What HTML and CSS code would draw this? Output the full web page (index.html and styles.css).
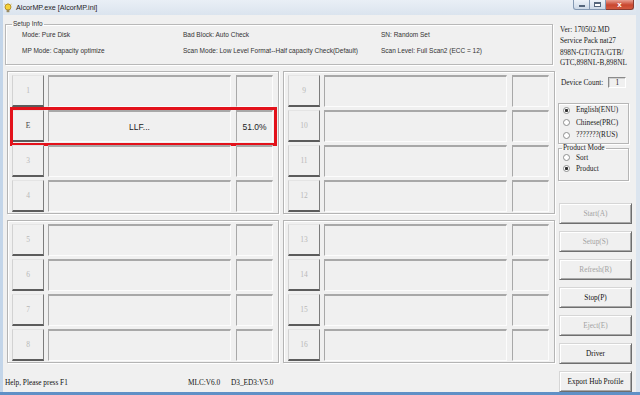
FILE: index.html
```html
<!DOCTYPE html>
<html lang="en">
<head>
  <meta charset="UTF-8">
  <title>AlcorMP.exe [AlcorMP.ini]</title>
  <link rel="stylesheet" href="styles.css">
</head>
<body>
  <div class="window">
    <div class="titlebar">
      <svg class="app-icon" width="8" height="10" viewBox="0 0 8 10">
        <circle cx="4" cy="4" r="3" fill="#f5d23a" stroke="#a9831a" stroke-width="0.8"/>
        <rect x="2.6" y="6.8" width="2.8" height="2.4" fill="#9a8a60"/>
        <path d="M0.3 1 L1.3 1.8 M7.7 1 L6.7 1.8 M4 0 L4 0.8" stroke="#d6a520" stroke-width="0.6"/>
      </svg>
      <span class="title">AlcorMP.exe [AlcorMP.ini]</span>
      <div class="controls">
        <span class="ctl ctl-min"><i></i></span>
        <span class="ctl ctl-max"><i></i></span>
        <span class="ctl ctl-close">x</span>
      </div>
    </div>

    <div class="client">
      <div class="main">
        <fieldset class="setup">
          <legend>Setup Info</legend>
          <div class="info-grid">
            <span>Mode: Pure Disk</span>
            <span>Bad Block: Auto Check</span>
            <span>SN: Random Set</span>
            <span>MP Mode: Capacity optimize</span>
            <span>Scan Mode: Low Level Format--Half capacity Check(Default)</span>
            <span>Scan Level: Full Scan2 (ECC = 12)</span>
          </div>
        </fieldset>

        <div class="slots">
          <div class="group">
            <div class="row"><div class="slot-btn">1</div><div class="field"></div><div class="field"></div></div>
            <div class="row">
              <div class="slot-btn active">E</div>
              <div class="field busy">LLF...</div>
              <div class="field busy">51.0%</div>
              <div class="highlight"></div>
            </div>
            <div class="row"><div class="slot-btn">3</div><div class="field"></div><div class="field"></div></div>
            <div class="row"><div class="slot-btn">4</div><div class="field"></div><div class="field"></div></div>
          </div>
          <div class="group">
            <div class="row"><div class="slot-btn">9</div><div class="field"></div><div class="field"></div></div>
            <div class="row"><div class="slot-btn">10</div><div class="field"></div><div class="field"></div></div>
            <div class="row"><div class="slot-btn">11</div><div class="field"></div><div class="field"></div></div>
            <div class="row"><div class="slot-btn">12</div><div class="field"></div><div class="field"></div></div>
          </div>
          <div class="group">
            <div class="row"><div class="slot-btn">5</div><div class="field"></div><div class="field"></div></div>
            <div class="row"><div class="slot-btn">6</div><div class="field"></div><div class="field"></div></div>
            <div class="row"><div class="slot-btn">7</div><div class="field"></div><div class="field"></div></div>
            <div class="row"><div class="slot-btn">8</div><div class="field"></div><div class="field"></div></div>
          </div>
          <div class="group">
            <div class="row"><div class="slot-btn">13</div><div class="field"></div><div class="field"></div></div>
            <div class="row"><div class="slot-btn">14</div><div class="field"></div><div class="field"></div></div>
            <div class="row"><div class="slot-btn">15</div><div class="field"></div><div class="field"></div></div>
            <div class="row"><div class="slot-btn">16</div><div class="field"></div><div class="field"></div></div>
          </div>
        </div>

        <div class="statusbar">
          <span>Help, Please press F1</span>
          <span>MLC:V6.0</span>
          <span>D3_ED3:V5.0</span>
        </div>
      </div>

      <div class="side">
        <div class="ver">
          <div>Ver: 170502.MD</div>
          <div>Service Pack nat27</div>
        </div>
        <div class="chips">
          <div>898N-GT/GTA/GTB/</div>
          <div>GTC,898NL-B,898NL</div>
        </div>
        <div class="device-count">
          <span>Device Count:</span>
          <span class="count-box">1</span>
        </div>
        <div class="lang">
          <div class="radio"><span class="dot on"></span>English(ENU)</div>
          <div class="radio"><span class="dot"></span>Chinese(PRC)</div>
          <div class="radio"><span class="dot"></span>???????(RUS)</div>
        </div>
        <fieldset class="mode">
          <legend>Product Mode</legend>
          <div class="radio"><span class="dot"></span>Sort</div>
          <div class="radio"><span class="dot on"></span>Product</div>
        </fieldset>
        <div class="buttons">
          <button class="btn" disabled>Start(A)</button>
          <button class="btn" disabled>Setup(S)</button>
          <button class="btn" disabled>Refresh(R)</button>
          <button class="btn">Stop(P)</button>
          <button class="btn" disabled>Eject(E)</button>
          <button class="btn">Driver</button>
          <button class="btn">Export Hub Profile</button>
        </div>
      </div>
    </div>
  </div>
</body>
</html>
```

FILE: styles.css
```css
* {
  box-sizing: border-box;
}
body {
  margin: 0;
  width: 640px;
  height: 395px;
  overflow: hidden;
  background: linear-gradient(#8db4dc, #5f90c6);
  font-family: "Liberation Serif", "Times New Roman", serif;
}
.window {
  height: 392px;
  background: #dfe7f0;
  border-left: 3px solid #c3d5e9;
  border-right: 4px solid #dce5ef;
  display: flex;
  flex-direction: column;
}

/* title bar */
.titlebar {
  height: 15px;
  display: flex;
  align-items: center;
  background: linear-gradient(#e9eff6, #dbe4ee);
}
.app-icon {
  margin-left: 1px;
}
.title {
  margin-left: 4px;
  font: 7.2px "Liberation Sans", Arial, sans-serif;
  color: #1e1e1e;
}
.controls {
  margin-left: auto;
  margin-right: 2px;
  align-self: flex-start;
  display: flex;
}
.ctl {
  height: 10px;
  border: 1px solid #8499b3;
  border-top: none;
  background: linear-gradient(#eef3f9, #cdd9e7);
  display: flex;
  align-items: center;
  justify-content: center;
}
.ctl-min {
  width: 17px;
  border-radius: 0 0 0 3px;
}
.ctl-min i {
  width: 6px;
  height: 2px;
  margin-top: 3px;
  background: #fff;
  border: 1px solid #55667c;
}
.ctl-max {
  width: 16px;
  border-left: none;
}
.ctl-max i {
  width: 7px;
  height: 5px;
  border: 1px solid #55667c;
  border-top-width: 2px;
  background: #fff;
}
.ctl-close {
  width: 28px;
  border-left: none;
  border-color: #8b3b30;
  border-radius: 0 0 3px 0;
  background: linear-gradient(#e8a093, #c9462f 55%, #d2593f);
  color: #fff;
  font: bold 8px/1 "Liberation Sans", Arial, sans-serif;
}

/* client area */
.client {
  flex: 1;
  display: flex;
  background: #f0f0f0;
}
.main {
  width: 552px;
}

.setup {
  margin: 5px 0 0 2px;
  width: 548px;
  height: 45px;
  padding: 0;
  border: 1px solid #b8b8b8;
  box-shadow: inset 1px 1px #fff, 1px 1px #fff;
  font: 6.5px "Liberation Sans", Arial, sans-serif;
  color: #333;
}
.setup legend {
  margin-left: 6px;
  padding: 0 1px;
  line-height: 8px;
}
.info-grid {
  display: grid;
  grid-template-columns: 161px 198px 1fr;
  row-gap: 2px;
  padding-left: 16px;
  line-height: 14px;
}

.slots {
  margin: 6px 0 0 4px;
  display: grid;
  grid-template-columns: 272px 272px;
  grid-auto-rows: 143px;
  gap: 6px 4px;
}
.group {
  border: 1px solid #b4b4b4;
  box-shadow: inset 1px 1px #fff, 1px 1px #fff;
  padding: 3px 5px 0 4px;
  display: grid;
  grid-template-rows: repeat(4, 32px);
  row-gap: 3px;
}
.row {
  position: relative;
  display: grid;
  grid-template-columns: 32px 1fr 38px;
  column-gap: 4px;
}
.slot-btn {
  border: 1px solid;
  border-color: #e4e4e4 #7c7c7c #5c5c5c #d2d2d2;
  border-bottom-width: 2px;
  background: #f0f0f0;
  display: flex;
  align-items: center;
  justify-content: center;
  font-size: 7.5px;
  color: #b8b8b8;
}
.slot-btn.active {
  color: #444;
}
.field {
  border: 1px solid;
  border-color: #a8a8a8 #fcfcfc #fcfcfc #a8a8a8;
  border-top-width: 2px;
  background: #f0f0f0;
  display: flex;
  align-items: center;
  justify-content: center;
  font: 8.5px "Liberation Sans", Arial, sans-serif;
  color: #222;
}
.row .field + .field {
  margin-left: 1px;
}
.highlight {
  position: absolute;
  left: -2px;
  top: -3px;
  right: -4px;
  bottom: -4px;
  border: 3px solid #e3121b;
}

.statusbar {
  margin-top: 13px;
  padding-left: 2px;
  height: 14px;
  display: grid;
  grid-template-columns: 183px 43px auto;
  line-height: 14px;
  font-size: 7.3px;
  color: #111;
}

/* right column */
.side {
  flex: 1;
  padding-top: 9px;
  font-size: 7.3px;
  color: #222;
}
.ver {
  margin-left: 5px;
  line-height: 11px;
}
.chips {
  margin: 2px 0 0 5px;
  line-height: 10px;
}
.device-count {
  margin: 9px 0 0 6px;
  height: 11px;
  display: flex;
  align-items: center;
}
.count-box {
  margin-left: 5px;
  width: 18px;
  height: 11px;
  border: 1px solid;
  border-color: #8a8a8a #fff #fff #8a8a8a;
  box-shadow: inset 1px 1px #d0d0d0;
  text-align: center;
  line-height: 9px;
}
.lang,
.mode {
  margin: 0 0 0 3px;
  width: 71px;
  padding: 0 0 0 4px;
  border: 1px solid #b6b6b6;
  box-shadow: inset 1px 1px #fff, 1px 1px #fff;
}
.lang {
  margin-top: 15px;
  height: 41px;
  line-height: 12.5px;
}
.mode {
  height: 37px;
  line-height: 11px;
}
.mode legend {
  margin-left: -1px;
  padding: 0 1px;
  line-height: 8px;
}
.radio {
  display: flex;
  align-items: center;
}
.dot {
  width: 7px;
  height: 7px;
  margin-right: 6px;
  border: 1px solid #8e8f8f;
  border-radius: 50%;
  background: #fff;
}
.dot.on {
  background: radial-gradient(circle, #2f2f2f 1.3px, #fff 1.9px);
}

.buttons {
  margin: 22px 0 0 4px;
  display: flex;
  flex-direction: column;
  gap: 7px;
}
.btn {
  width: 73px;
  height: 21px;
  padding: 0;
  border: 1px solid;
  border-color: #d6d6d6 #6e6e6e #6e6e6e #d6d6d6;
  box-shadow: inset 1px 1px #fff, inset -1px -1px #a8a8a8;
  background: #f0f0f0;
  font: 7.3px "Liberation Serif", "Times New Roman", serif;
  color: #111;
}
.btn:disabled {
  color: #a3a3a3;
}
```
